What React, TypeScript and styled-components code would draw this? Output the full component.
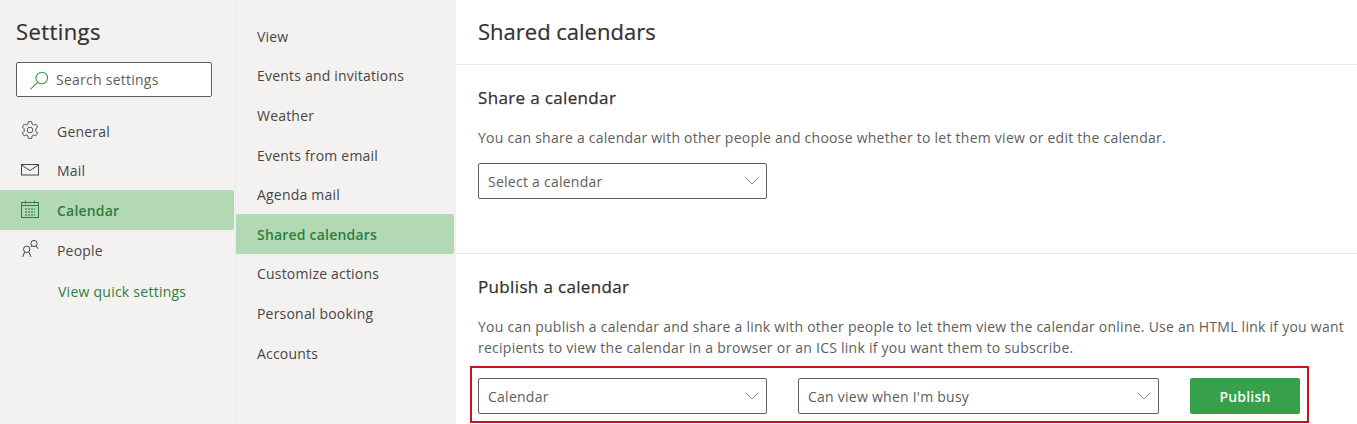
import React from 'react';
import styled, { createGlobalStyle } from 'styled-components';

const Global = createGlobalStyle`
  html, body {
    margin: 0;
    padding: 0;
    background: #fff;
    overflow: hidden;
  }
  body {
    font-family: "Open Sans", "Noto Sans", sans-serif;
    color: #323130;
  }
`;

const Page = styled.div`
  display: flex;
  width: 1357px;
  height: 424px;
  overflow: hidden;
`;

const LeftPanel = styled.nav`
  width: 235px;
  flex: none;
  background: #f3f2f1;
  border-right: 1px solid #eaeaea;
  padding-top: 16px;
`;

const SettingsTitle = styled.h1`
  margin: 0 0 16px 16px;
  font-size: 22px;
  line-height: 30px;
  font-weight: 400;
  letter-spacing: 0.4px;
  -webkit-text-stroke: 0.2px #323130;
`;

const SearchBox = styled.div`
  display: flex;
  align-items: center;
  gap: 6px;
  width: 196px;
  height: 35px;
  box-sizing: border-box;
  margin: 0 0 14px 16px;
  padding-left: 13px;
  background: #fff;
  border: 1px solid #605e5c;
  border-radius: 2px;
  font-size: 14px;
  letter-spacing: 0.25px;
  color: #605e5c;
`;

const NavItem = styled.div<{ $active?: boolean }>`
  display: flex;
  align-items: center;
  gap: 18px;
  height: 39.6px;
  margin-right: 1px;
  padding: 1px 0 0 21px;
  box-sizing: border-box;
  border-radius: 0 2px 2px 0;
  font-size: 14px;
  letter-spacing: 0.2px;
  background: ${(p) => (p.$active ? '#b2d9b4' : 'transparent')};
  color: ${(p) => (p.$active ? '#2f7d3c' : '#484644')};
  font-weight: ${(p) => (p.$active ? 600 : 400)};
`;

const IconSlot = styled.span`
  display: flex;
  width: 18px;
  height: 18px;
  flex: none;
  margin-top: -2px;
`;

const QuickLink = styled.a`
  display: block;
  margin: 13px 0 0 58px;
  font-size: 14px;
  letter-spacing: 0.25px;
  line-height: 20px;
  color: #2f7d3c;
`;

const MiddlePanel = styled.nav`
  width: 220px;
  flex: none;
  background: #f3f2f1;
  padding-top: 16px;
  box-sizing: border-box;
`;

const SubItem = styled.div<{ $active?: boolean }>`
  display: flex;
  align-items: center;
  width: 218px;
  height: 39.6px;
  padding: 1px 0 0 21px;
  box-sizing: border-box;
  border-radius: 2px;
  font-size: 14px;
  letter-spacing: 0.2px;
  background: ${(p) => (p.$active ? '#b2d9b4' : 'transparent')};
  color: ${(p) => (p.$active ? '#2f7d3c' : '#484644')};
  font-weight: ${(p) => (p.$active ? 600 : 400)};
`;

const Content = styled.main`
  flex: 1;
  min-width: 0;
`;

const PageHeader = styled.header`
  height: 65px;
  box-sizing: border-box;
  padding: 16px 0 0 22px;
  border-bottom: 1px solid #edebe9;
  font-size: 22px;
  line-height: 30px;
  -webkit-text-stroke: 0.2px #323130;
`;

const Section = styled.section<{ $height: number }>`
  height: ${(p) => p.$height}px;
  box-sizing: border-box;
  padding: 21px 0 0 22px;
  border-bottom: 1px solid #edebe9;

  &:last-child {
    border-bottom: 0;
  }
`;

const SectionTitle = styled.h2`
  margin: 0;
  font-size: 17px;
  line-height: 24px;
  font-weight: 400;
  letter-spacing: 0.35px;
  -webkit-text-stroke: 0.25px #323130;
`;

const Description = styled.p`
  margin: 17px 0 15px;
  width: 870px;
  font-size: 14px;
  letter-spacing: 0.25px;
  line-height: 21px;
  color: #605e5c;
`;

const Dropdown = styled.div<{ $width: number }>`
  display: flex;
  align-items: center;
  justify-content: space-between;
  width: ${(p) => p.$width}px;
  height: 36px;
  flex: none;
  box-sizing: border-box;
  padding: 0 7px 0 9px;
  background: #fff;
  border: 1px solid #605e5c;
  border-radius: 2px;
  font-size: 14px;
  letter-spacing: 0.25px;
  color: #605e5c;
`;

const Highlight = styled.div`
  display: flex;
  align-items: center;
  width: 839px;
  height: 57px;
  box-sizing: border-box;
  margin: -7px 0 0 -8px;
  padding: 3px 0 0 6px;
  border: 2px solid #c8141c;
`;

const SecondDropdown = styled.div`
  margin-left: 31px;
`;

const PublishButton = styled.button`
  width: 110px;
  height: 36px;
  margin-left: 31px;
  padding: 0;
  border: 0;
  border-radius: 2px;
  background: #36a04a;
  color: #f4fbf5;
  font-family: inherit;
  font-size: 14px;
  letter-spacing: 0.2px;
  font-weight: 600;
`;

const Chevron = () => (
  <svg width="14" height="8" viewBox="0 0 14 8" fill="none" stroke="#8a8886" strokeWidth="1">
    <path d="M0.5 0.5 L7 7 L13.5 0.5" />
  </svg>
);

const SearchIcon = () => (
  <svg width="20" height="20" viewBox="0 0 20 20" fill="none" stroke="#2f9e4a" strokeWidth="1.1">
    <circle cx="11.8" cy="8" r="5.8" />
    <path d="M7.7 12.2 L0.6 19.2" />
  </svg>
);

const GearIcon = () => (
  <svg width="18" height="18" viewBox="0 0 18 18" fill="none" stroke="#484644" strokeWidth="0.9">
    <circle cx="9" cy="9" r="2.8" />
    <path d="M7.2 0.8 C8.4 0.4 9.6 0.4 10.8 0.8 L11 3 L12.7 4 L14.8 3.1 C15.6 4 16.2 5 16.6 6.2 L14.8 7.5 V10.5 L16.6 11.8 C16.2 13 15.6 14 14.8 14.9 L12.7 14 L11 15 L10.8 17.2 C9.6 17.6 8.4 17.6 7.2 17.2 L7 15 L5.3 14 L3.2 14.9 C2.4 14 1.8 13 1.4 11.8 L3.2 10.5 V7.5 L1.4 6.2 C1.8 5 2.4 4 3.2 3.1 L5.3 4 L7 3 Z" />
  </svg>
);

const MailIcon = () => (
  <svg width="18" height="18" viewBox="0 0 18 18" fill="none" stroke="#484644" strokeWidth="1">
    <rect x="0.5" y="3.5" width="17" height="10.5" />
    <path d="M0.5 4 L9 9.5 L17.5 4" />
  </svg>
);

const CalendarIcon = () => (
  <svg width="18" height="18" viewBox="0 0 18 18" fill="none" stroke="#2f7d3c" strokeWidth="1">
    <rect x="0.5" y="2.5" width="17" height="15" />
    <path d="M0.5 5.5 H17.5 M4.5 0.8 V3.5 M13.5 0.8 V3.5" strokeWidth="1.2" />
    <path d="M4 9 H14 M4 12 H14 M4 15 H14" strokeWidth="1.4" strokeDasharray="2 1" opacity="0.75" />
  </svg>
);

const PeopleIcon = () => (
  <svg width="18" height="18" viewBox="0 0 18 18" fill="none" stroke="#484644" strokeWidth="1">
    <circle cx="5.7" cy="9.3" r="3.2" />
    <path d="M3.6 12 L1.7 17 M7.8 12 L10 17" />
    <circle cx="13" cy="3.5" r="3.1" />
    <path d="M15.2 6 L17 8.8 M10.8 6 L10 7" />
  </svg>
);

const mainNav = [
  { label: 'General', icon: <GearIcon /> },
  { label: 'Mail', icon: <MailIcon /> },
  { label: 'Calendar', icon: <CalendarIcon />, active: true },
  { label: 'People', icon: <PeopleIcon /> },
];

const subNav = [
  'View',
  'Events and invitations',
  'Weather',
  'Events from email',
  'Agenda mail',
  'Shared calendars',
  'Customize actions',
  'Personal booking',
  'Accounts',
];

export default function App() {
  return (
    <Page>
      <Global />
      <LeftPanel>
        <SettingsTitle>Settings</SettingsTitle>
        <SearchBox>
          <SearchIcon />
          Search settings
        </SearchBox>
        {mainNav.map((item) => (
          <NavItem key={item.label} $active={item.active}>
            <IconSlot>{item.icon}</IconSlot>
            {item.label}
          </NavItem>
        ))}
        <QuickLink>View quick settings</QuickLink>
      </LeftPanel>
      <MiddlePanel>
        {subNav.map((label) => (
          <SubItem key={label} $active={label === 'Shared calendars'}>
            {label}
          </SubItem>
        ))}
      </MiddlePanel>
      <Content>
        <PageHeader>Shared calendars</PageHeader>
        <Section $height={189}>
          <SectionTitle>Share a calendar</SectionTitle>
          <Description>
            You can share a calendar with other people and choose whether to let them view or edit the calendar.
          </Description>
          <Dropdown $width={289}>
            Select a calendar
            <Chevron />
          </Dropdown>
        </Section>
        <Section $height={170}>
          <SectionTitle>Publish a calendar</SectionTitle>
          <Description>
            You can publish a calendar and share a link with other people to let them view the calendar online. Use an
            HTML link if you want recipients to view the calendar in a browser or an ICS link if you want them to
            subscribe.
          </Description>
          <Highlight>
            <Dropdown $width={289}>
              Calendar
              <Chevron />
            </Dropdown>
            <SecondDropdown>
              <Dropdown $width={361}>
                Can view when I'm busy
                <Chevron />
              </Dropdown>
            </SecondDropdown>
            <PublishButton>Publish</PublishButton>
          </Highlight>
        </Section>
      </Content>
    </Page>
  );
}
